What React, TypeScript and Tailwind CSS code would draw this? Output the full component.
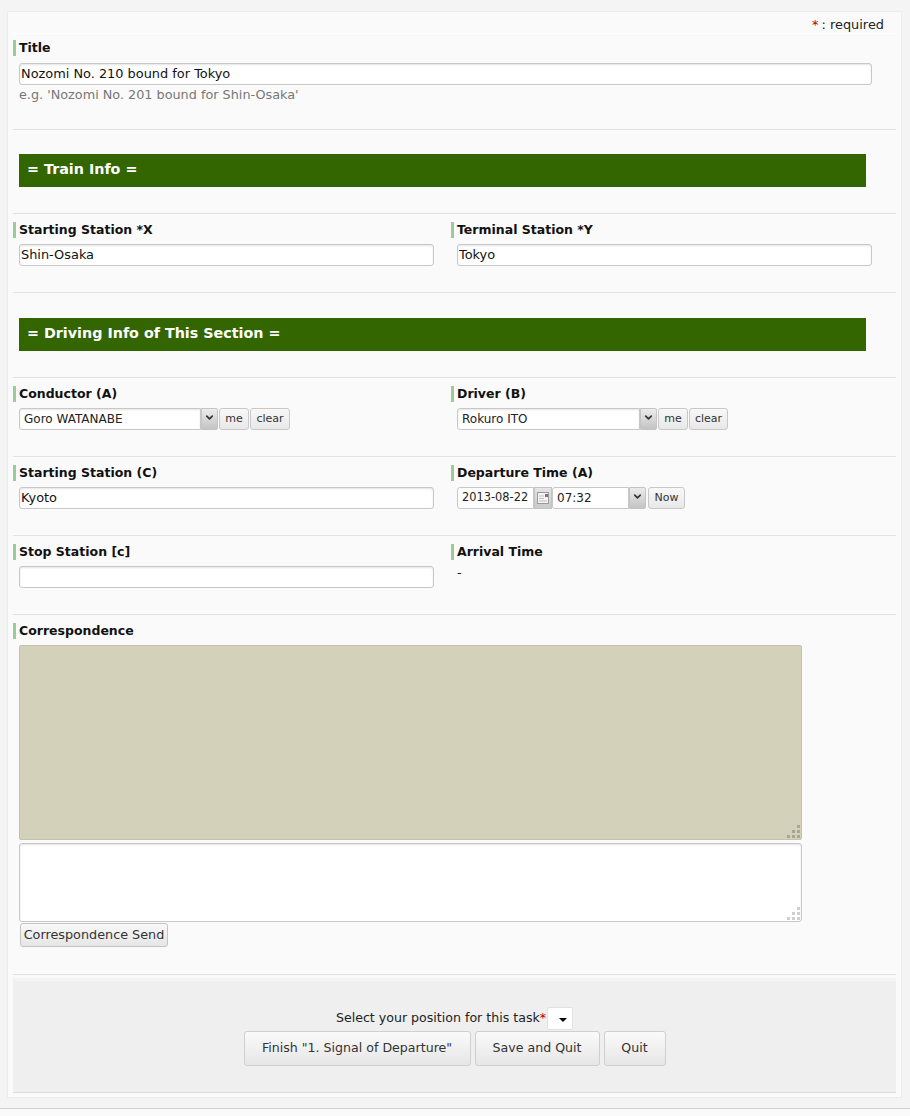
import React, { FC, ReactNode } from 'react';
import { ChevronDown } from 'lucide-react';

const Label: FC<{ children: ReactNode }> = ({ children }) => (
  <div className="h-4 border-l-[3px] border-[#99cc99] pl-[3px] text-[12.5px] leading-4 font-bold text-[#111]">
    {children}
  </div>
);

const TextInput: FC<{ value?: string; className?: string }> = ({
  value = '',
  className = 'w-[415px]',
}) => (
  <input
    readOnly
    value={value}
    className={`block h-[22px] rounded-[3px] border border-[#c8c8c8] bg-white px-[1px] pb-[2px] text-[12.9px] text-[#111] shadow-[inset_0_1px_2px_#e4e4e4] outline-none ${className}`}
  />
);

const SmallButton: FC<{ children: ReactNode; className: string }> = ({
  children,
  className,
}) => (
  <button
    className={`flex h-[22px] items-center justify-center rounded-[3px] border border-[#c8c8c8] bg-gradient-to-b from-[#f8f8f8] to-[#e8e8e8] text-[11px] text-[#333] ${className}`}
  >
    {children}
  </button>
);

const ArrowBox: FC = () => (
  <div className="flex h-[22px] w-[17px] items-center justify-center rounded-r-[2px] border border-[#c4c4c4] bg-gradient-to-b from-[#ececec] to-[#c4c4c4]">
    <ChevronDown size={11} strokeWidth={3.5} className="mb-1 text-[#333]" />
  </div>
);

const UserSelect: FC<{ name: string; width: string; clearWidth: string }> = ({
  name,
  width,
  clearWidth,
}) => (
  <div className="ml-[6px] mt-[6px] flex items-center">
    <div
      className={`flex h-[22px] items-center rounded-l-[3px] border border-[#c8c8c8] bg-white pl-1 text-[12px] text-[#222] shadow-[inset_0_1px_2px_#e4e4e4] ${width}`}
    >
      {name}
    </div>
    <ArrowBox />
    <SmallButton className="ml-[1px] w-[30px]">me</SmallButton>
    <SmallButton className={`ml-[1px] ${clearWidth}`}>clear</SmallButton>
  </div>
);

const SectionBar: FC<{ title: string; className: string }> = ({ title, className }) => (
  <div className={`border-b border-[#e2e2e2] pl-[6px] ${className}`}>
    <div className="flex h-[33px] w-[847px] items-center bg-[#336600] pb-[2px] pl-2 text-[14.3px] font-bold text-white">
      {title}
    </div>
  </div>
);

const Row: FC<{ children: ReactNode }> = ({ children }) => (
  <div className="grid h-[79px] grid-cols-[438px_1fr] border-b border-[#e2e2e2] pt-2">
    {children}
  </div>
);

const Grip: FC<{ color: string }> = ({ color }) => (
  <svg
    width="13"
    height="13"
    viewBox="0 0 13 13"
    className="absolute bottom-[1px] right-[1px]"
    fill={color}
  >
    <rect x="10" y="0" width="3" height="3" />
    <rect x="5" y="5" width="3" height="3" />
    <rect x="10" y="5" width="3" height="3" />
    <rect x="0" y="10" width="3" height="3" />
    <rect x="5" y="10" width="3" height="3" />
    <rect x="10" y="10" width="3" height="3" />
  </svg>
);

const FooterButton: FC<{ children: ReactNode; className: string }> = ({
  children,
  className,
}) => (
  <button
    className={`h-[35px] rounded-[3px] border border-[#cfcfcf] bg-gradient-to-b from-[#fafafa] to-[#e6e6e6] text-[12.6px] text-[#333] ${className}`}
  >
    {children}
  </button>
);

const App: FC = () => {
  return (
    <div className="h-[1116px] w-[910px] overflow-hidden bg-[#f4f4f4] pt-[11px] font-['DejaVu_Sans','Liberation_Sans',sans-serif]">
      <div className="ml-[7px] h-[1087px] w-[895px] border border-[#ececec] bg-[#fafafa] px-[5px]">
        <div className="flex h-[22px] items-center justify-end border-b border-white pr-[12px] pt-[4px] text-[12.9px] text-[#222]">
          <span className="mr-[3px] text-[#b00000]">*</span>: required
        </div>

        <div className="h-[96px] border-b border-[#e2e2e2] pt-[6px]">
          <Label>Title</Label>
          <div className="ml-[6px] mt-[7px]">
            <TextInput value="Nozomi No. 210 bound for Tokyo" className="w-[853px]" />
          </div>
          <div className="ml-[6px] text-[12.8px] leading-[20px] text-[#777]">
            e.g. 'Nozomi No. 201 bound for Shin-Osaka'
          </div>
        </div>

        <SectionBar title="= Train Info =" className="h-[84px] pt-6" />

        <Row>
          <div>
            <Label>Starting Station *X</Label>
            <div className="ml-[6px] mt-[6px]">
              <TextInput value="Shin-Osaka" />
            </div>
          </div>
          <div>
            <Label>Terminal Station *Y</Label>
            <div className="ml-[6px] mt-[6px]">
              <TextInput value="Tokyo" />
            </div>
          </div>
        </Row>

        <SectionBar title="= Driving Info of This Section =" className="h-[85px] pt-[25px]" />

        <Row>
          <div>
            <Label>Conductor (A)</Label>
            <UserSelect name="Goro WATANABE" width="w-[182px]" clearWidth="w-[40px]" />
          </div>
          <div>
            <Label>Driver (B)</Label>
            <UserSelect name="Rokuro ITO" width="w-[183px]" clearWidth="w-[39px]" />
          </div>
        </Row>

        <Row>
          <div>
            <Label>Starting Station (C)</Label>
            <div className="ml-[6px] mt-[6px]">
              <TextInput value="Kyoto" />
            </div>
          </div>
          <div>
            <Label>Departure Time (A)</Label>
            <div className="ml-[6px] mt-[6px] flex items-center">
              <div className="flex h-[22px] w-[77px] items-center rounded-l-[3px] border border-[#c8c8c8] bg-white pl-1 text-[11.4px] text-[#222]">
                2013-08-22
              </div>
              <div className="flex h-[22px] w-[18px] items-center justify-center border border-[#c4c4c4] bg-gradient-to-b from-[#e6e6e6] to-[#cacaca]">
                <svg width="12" height="12" viewBox="0 0 12 12">
                  <rect x="0.5" y="0.5" width="11" height="11" fill="#f4f4f4" stroke="#9a9a9a" />
                  <path d="M2 4h5M2 6.5h5M2 9h8" stroke="#c0c0c0" />
                  <rect x="8" y="2" width="3" height="3" fill="#777" />
                </svg>
              </div>
              <div className="flex h-[22px] w-[77px] items-center rounded-l-[3px] border border-[#c8c8c8] bg-white pl-1 text-[12px] text-[#222]">
                07:32
              </div>
              <ArrowBox />
              <SmallButton className="ml-[2px] w-[37px]">Now</SmallButton>
            </div>
          </div>
        </Row>

        <Row>
          <div>
            <Label>Stop Station [c]</Label>
            <div className="ml-[6px] mt-[6px]">
              <TextInput />
            </div>
          </div>
          <div>
            <Label>Arrival Time</Label>
            <div className="ml-[6px] mt-[3px] text-[13px] leading-5 text-[#222]">-</div>
          </div>
        </Row>

        <div className="h-[360px] border-b border-[#e2e2e2] pt-2">
          <Label>Correspondence</Label>
          <div className="relative ml-[6px] mt-[6px] h-[195px] w-[783px] rounded-[2px] border border-[#c4c2ac] bg-[#d4d1bb]">
            <Grip color="#a8a698" />
          </div>
          <div className="relative ml-[6px] mt-[3px] h-[79px] w-[783px] rounded-[3px] border border-[#c8c8c8] bg-white shadow-[inset_0_1px_2px_#e4e4e4]">
            <Grip color="#cfcfcf" />
          </div>
          <button className="ml-[7px] mt-[1px] block h-6 w-[148px] rounded-[3px] border border-[#c4c4c4] bg-gradient-to-b from-[#f8f8f8] to-[#e6e6e6] text-[12.8px] text-[#333]">
            Correspondence Send
          </button>
        </div>

        <div className="mt-[3px] h-[115px] border-b border-[#dcdcdc] border-t-[3px] border-t-[#f3f3f3] bg-[#efefef] pt-[26px]">
          <div className="flex h-[23px] items-center justify-center text-[12.6px] text-[#222]">
            <span>Select your position for this task</span>
            <span className="text-[#b00000]">*</span>
            <div className="ml-[1px] flex h-[23px] w-[26px] items-center justify-end rounded-[2px] border border-[#e2e2e2] bg-white pr-[5px]">
              <div className="mt-[2px] h-0 w-0 border-x-[4px] border-t-[4px] border-x-transparent border-t-black" />
            </div>
          </div>
          <div className="mt-[1px] flex justify-center gap-1">
            <FooterButton className="w-[227px]">Finish "1. Signal of Departure"</FooterButton>
            <FooterButton className="w-[125px]">Save and Quit</FooterButton>
            <FooterButton className="w-[62px]">Quit</FooterButton>
          </div>
        </div>
      </div>
      <div className="mt-[10px] h-2 border-t border-[#cfcfcf] bg-[#fafafa]" />
    </div>
  );
};

export default App;
